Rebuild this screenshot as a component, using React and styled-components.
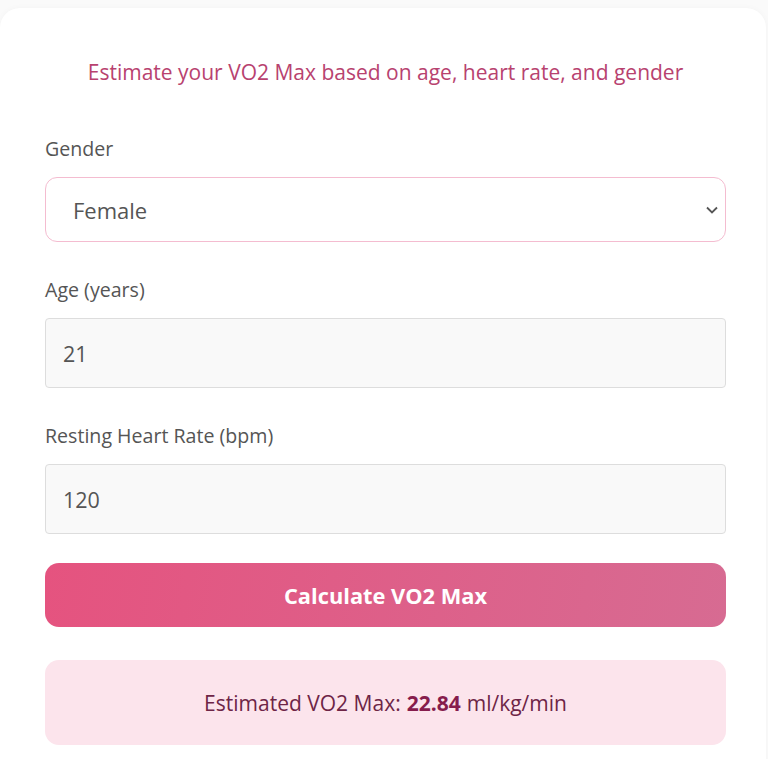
import { useState } from "react";
import styled, { createGlobalStyle } from "styled-components";

const GlobalStyle = createGlobalStyle`
  body {
    margin: 0;
    background: #fafafa;
    font-family: "Open Sans", "Noto Sans", sans-serif;
  }
`;

function calcVo2(age, hr) {
  const maxHr = 208 - 0.7 * age;
  return 15.3 * (maxHr / hr);
}

function App() {
  const [gender, setGender] = useState("female");
  const [age, setAge] = useState("21");
  const [hr, setHr] = useState("120");
  const [result, setResult] = useState(22.84);

  const onCalc = () => {
    const a = parseFloat(age);
    const h = parseFloat(hr);
    if (a > 0 && h > 0) setResult(Number(calcVo2(a, h).toFixed(2)));
  };

  return (
    <>
      <GlobalStyle />
      <Card>
        <Subtitle>Estimate your VO2 Max based on age, heart rate, and gender</Subtitle>

        <Field>
          <Label>Gender</Label>
          <SelectWrap>
            <Select value={gender} onChange={(e) => setGender(e.target.value)}>
              <option value="female">Female</option>
              <option value="male">Male</option>
            </Select>
            <Chevron viewBox="0 0 12 8" width="12" height="8">
              <path d="M1 1.5 6 6.5 11 1.5" fill="none" stroke="#555" strokeWidth="1.8" />
            </Chevron>
          </SelectWrap>
        </Field>

        <Field>
          <Label>Age (years)</Label>
          <Input type="number" value={age} onChange={(e) => setAge(e.target.value)} />
        </Field>

        <Field>
          <Label>Resting Heart Rate (bpm)</Label>
          <Input type="number" value={hr} onChange={(e) => setHr(e.target.value)} />
        </Field>

        <Button onClick={onCalc}>Calculate VO2 Max</Button>

        <Result>
          Estimated VO2 Max: <strong>{result}</strong> ml/kg/min
        </Result>
      </Card>
    </>
  );
}

const Card = styled.div`
  box-sizing: border-box;
  width: 766px;
  margin-top: 8px;
  padding: 50px 40px 40px 45px;
  background: #fff;
  border-radius: 20px;
  box-shadow: 0 0 6px rgba(0, 0, 0, 0.03);
`;

const Subtitle = styled.p`
  margin: 0 0 51px;
  text-align: center;
  color: #b8426f;
  font-size: 21px;
  line-height: 28px;
`;

const Field = styled.div`
  margin-bottom: 36px;
`;

const Label = styled.label`
  display: block;
  margin-bottom: 16px;
  color: #555;
  font-size: 19.6px;
  line-height: 24px;
`;

const SelectWrap = styled.div`
  position: relative;
  width: 681px;
`;

const Select = styled.select`
  box-sizing: border-box;
  display: block;
  width: 100%;
  height: 65px;
  padding: 0 27px;
  appearance: none;
  background: #fff;
  border: 1.5px solid #f4bcd0;
  border-radius: 12px;
  color: #555;
  font-family: inherit;
  font-size: 22px;
  outline: none;
`;

const Chevron = styled.svg`
  position: absolute;
  right: 8px;
  top: 29px;
  pointer-events: none;
`;

const Input = styled.input`
  box-sizing: border-box;
  display: block;
  width: 681px;
  height: 70px;
  padding: 0 17px;
  background: #f9f9f9;
  border: 1px solid #ddd;
  border-radius: 4px;
  color: #555;
  font-family: inherit;
  font-size: 21.5px;
  outline: none;
  -moz-appearance: textfield;
  &::-webkit-inner-spin-button,
  &::-webkit-outer-spin-button {
    -webkit-appearance: none;
    margin: 0;
  }
`;

const Button = styled.button`
  display: block;
  width: 681px;
  height: 64px;
  margin-top: -7px;
  border: none;
  border-radius: 14px;
  background: linear-gradient(100deg, #e5537f 0%, #d76b92 100%);
  color: #fff;
  font-family: inherit;
  font-size: 21.8px;
  font-weight: 700;
  cursor: pointer;
`;

const Result = styled.div`
  box-sizing: border-box;
  width: 681px;
  height: 85px;
  margin-top: 33px;
  display: flex;
  align-items: center;
  justify-content: center;
  background: #fce4ec;
  border-radius: 14px;
  color: #6e2446;
  font-size: 21px;
  strong {
    margin: 0 6px;
    color: #861c4c;
    font-weight: 700;
  }
`;

export default App;
